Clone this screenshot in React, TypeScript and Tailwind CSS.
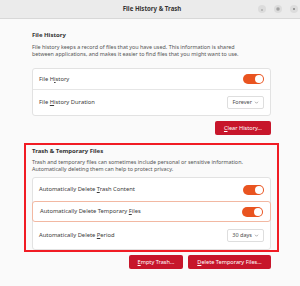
import React from 'react';

const Toggle: React.FC = () => (
  <div className="w-[21px] h-[10px] rounded-full bg-[#e95420] flex items-center justify-end pr-[1px]">
    <div className="w-[8px] h-[8px] rounded-full bg-white" />
  </div>
);

const Chevron: React.FC = () => (
  <svg width="5" height="5" viewBox="0 0 10 10" className="ml-[2px]">
    <path d="M2 3.5 L5 6.5 L8 3.5" fill="none" stroke="#777" strokeWidth="1.2" />
  </svg>
);

const Dropdown: React.FC<{ label: string }> = ({ label }) => (
  <div className="h-[13.5px] px-[4px] flex items-center rounded-[2px] border border-[#dedede] bg-white text-[#4a4a4a] text-[5.5px]">
    {label}
    <Chevron />
  </div>
);

const Mn: React.FC<{ c: string }> = ({ c }) => <span className="underline underline-offset-[1px]">{c}</span>;

const RedButton: React.FC<{ children: React.ReactNode; w: string }> = ({ children, w }) => (
  <div className={`${w} h-[13.5px] flex items-center justify-center rounded-[2px] bg-[#c7162b] text-white text-[5.6px]`}>
    {children}
  </div>
);

const WinButton: React.FC<{ kind: 'min' | 'max' | 'close' }> = ({ kind }) => (
  <div className="w-[8.5px] h-[8.5px] rounded-full bg-[#dcdcdc] flex items-center justify-center">
    <svg width="4" height="4" viewBox="0 0 8 8">
      {kind === 'min' && <path d="M2 6 H6" stroke="#555" strokeWidth="1" />}
      {kind === 'max' && <rect x="2" y="2" width="4" height="4" fill="none" stroke="#555" strokeWidth="1" />}
      {kind === 'close' && <path d="M2 2 L6 6 M6 2 L2 6" stroke="#555" strokeWidth="1" />}
    </svg>
  </div>
);

export default function App() {
  return (
    <div className="w-[300px] h-[286px] overflow-hidden bg-[#fafafa] font-['Noto_Sans',sans-serif] text-[#333]">
      <div className="h-[19px] bg-[#ebebeb] border-b border-[#d8d8d8] flex items-center relative">
        <div className="flex-1 text-center font-bold text-[6.1px] text-[#333] pl-[4px]">File History &amp; Trash</div>
        <div className="absolute right-[2px] top-[4.5px] flex gap-[7.5px]">
          <WinButton kind="min" />
          <WinButton kind="max" />
          <WinButton kind="close" />
        </div>
      </div>

      <div className="pl-[32px] pr-[29px] pt-[12px]">
        <div className="font-bold text-[6px] leading-[8px]">File History</div>
        <div className="mt-[5px] text-[5.4px] leading-[7px] text-[#555]">
          File history keeps a record of files that you have used. This information is shared
          <br />
          between applications, and makes it easier to find files that you might want to use.
        </div>

        <div className="mt-[10px] rounded-[3px] border border-[#e2e2e2] bg-white text-[5.8px] text-[#3a3a3a]">
          <div className="h-[21px] px-[6px] flex items-center justify-between border-b border-[#e6e6e6]">
            <span>File H<Mn c="i" />story</span>
            <Toggle />
          </div>
          <div className="h-[25px] px-[6px] flex items-center justify-between">
            <span>File <Mn c="H" />istory Duration</span>
            <Dropdown label="Forever" />
          </div>
        </div>

        <div className="mt-[5px] flex justify-end">
          <RedButton w="w-[56px]"><span><Mn c="C" />lear History…</span></RedButton>
        </div>

        <div className="mt-[8.5px] -mx-[8px] border-2 border-[#f11c24] px-[6px] pt-[2px]">
          <div className="font-bold text-[6px] leading-[8px]">Trash &amp; Temporary Files</div>
          <div className="mt-[4px] text-[5.4px] leading-[7px] text-[#555]">
            Trash and temporary files can sometimes include personal or sensitive information.
            <br />
            Automatically deleting them can help to protect privacy.
          </div>
          <div className="mt-[4px] rounded-[3px] border border-[#e2e2e2] bg-white text-[5.8px] text-[#3a3a3a]">
            <div className="h-[23px] px-[6px] flex items-center justify-between">
              <span>Automatically Delete <Mn c="T" />rash Content</span>
              <Toggle />
            </div>
            <div className="h-[21px] -mx-px px-[7px] flex items-center justify-between rounded-[3px] border border-[#f2b8a2]">
              <span>Automatically Delete Temporary <Mn c="F" />iles</span>
              <Toggle />
            </div>
            <div className="h-[27px] px-[6px] flex items-center justify-between">
              <span>Automatically Delete <Mn c="P" />eriod</span>
              <Dropdown label="30 days" />
            </div>
          </div>
        </div>

        <div className="mt-[3px] flex justify-end gap-[5px]">
          <RedButton w="w-[54px]"><span><Mn c="E" />mpty Trash…</span></RedButton>
          <RedButton w="w-[83px]"><span><Mn c="D" />elete Temporary Files…</span></RedButton>
        </div>
      </div>
    </div>
  );
}
